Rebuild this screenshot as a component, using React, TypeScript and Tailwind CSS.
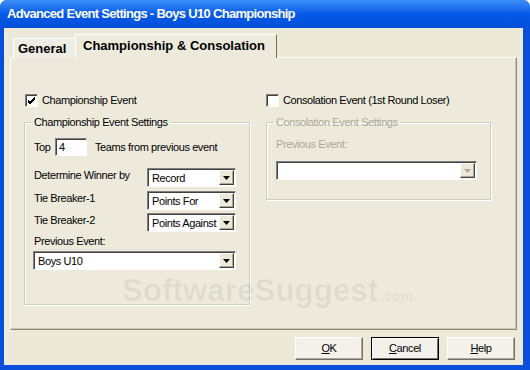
const ui = "font-['Liberation_Sans',Arial,sans-serif]"

function Arrow({ off }: { off?: boolean }) {
  return (
    <svg width="7" height="4" viewBox="0 0 7 4">
      <path d="M0 0h7L3.5 4z" fill={off ? "#ACA899" : "#000"} />
    </svg>
  )
}

function Combo({ value, className = "", off }: { value?: string; className?: string; off?: boolean }) {
  return (
    <div
      className={`flex h-[19px] items-stretch border border-t-[#808080] border-l-[#808080] border-r-white border-b-white bg-white shadow-[inset_1px_1px_0_#404040] ${className}`}
    >
      <span className="flex-1 truncate pl-[4px] pt-[1px] leading-[16px]">{value}</span>
      <span className="m-[1px] flex w-[15px] items-center justify-center border border-t-white border-l-white border-r-[#404040] border-b-[#404040] bg-[#ECE9D8] shadow-[inset_-1px_-1px_0_#ACA899]">
        <Arrow off={off} />
      </span>
    </div>
  )
}

function Check({ on }: { on?: boolean }) {
  return (
    <span className="flex h-[13px] w-[13px] shrink-0 items-center justify-center border border-t-[#808080] border-l-[#808080] border-r-white border-b-white bg-white shadow-[inset_1px_1px_0_#404040]">
      {on && (
        <svg width="9" height="9" viewBox="0 0 9 9">
          <path d="M1 4l2 2 5-5M1 5l2 2 5-5M1 6l2 2 5-5" stroke="#000" strokeWidth="1" fill="none" />
        </svg>
      )}
    </span>
  )
}

function Btn({ hot, rest, def }: { hot: string; rest: string; def?: boolean }) {
  return (
    <div
      className={`flex h-[23px] w-[68px] items-center justify-center bg-[#F3F1EA] ${
        def
          ? "border border-black shadow-[inset_1px_1px_0_white,inset_-1px_-1px_0_#716F64]"
          : "border border-t-white border-l-white border-r-[#716F64] border-b-[#716F64] shadow-[inset_-1px_-1px_0_#ACA899]"
      }`}
    >
      <span>
        <span className="underline">{hot}</span>
        {rest}
      </span>
    </div>
  )
}

export default function App() {
  return (
    <div className={`${ui} flex h-[370px] w-[530px] flex-col overflow-hidden rounded-t-[7px] bg-[#0A4FDB] text-[11px] tracking-[-0.4px] text-black`}>
      <div className="flex h-[28px] shrink-0 items-center bg-linear-to-b from-[#3D8FF7] via-[#0559E7] to-[#0350DA] pl-[7px] text-[13px] font-bold tracking-[-0.7px] text-white">
        Advanced Event Settings - Boys U10 Championship
      </div>

      <div className="mb-[5px] ml-[4px] mr-[7px] flex flex-1 flex-col bg-[#ECE9D8] pl-[6px]">
        {/* tabs */}
        <div className="relative z-10 mt-[6px] -mb-[1px] flex h-[24px] items-end text-[13px] font-bold tracking-normal">
          <div className="ml-[3px] flex h-[20px] w-[62px] items-center border-t border-l border-t-white border-l-white bg-[#EFEDE3] pl-[4px]">
            General
          </div>
          <div className="flex h-[24px] w-[202px] items-center justify-center border-t border-l border-r border-t-white border-l-white border-r-[#716F64] bg-[#EDEADC] pb-[2px] pr-[4px]">
            Championship &amp; Consolation
          </div>
        </div>

        {/* panel */}
        <div className="relative flex h-[273px] w-[507px] border border-t-white border-l-white border-r-[#8E8B7D] border-b-[#8E8B7D] bg-[#EDEADC] pl-[13px] pt-[35px] shadow-[inset_-1px_-1px_0_#C9C6B6]">
          {/* left column */}
          <div className="flex w-[226px] flex-col">
            <div className="flex h-[14px] items-center gap-[4px] pl-[1px]">
              <Check on />
              <span>Championship Event</span>
            </div>
            <fieldset className="mt-[9px] h-[189px] border border-[#D0CEBF] px-[9px] shadow-[inset_1px_1px_0_white,1px_1px_0_white]">
              <legend className="-ml-[2px] px-[2px] leading-[13px]">Championship Event Settings</legend>
              <div className="mt-[9px] flex h-[18px] items-center">
                <span className="w-[21px]">Top</span>
                <div className="h-[18px] w-[32px] border border-t-[#808080] border-l-[#808080] border-r-white border-b-white bg-white pl-[3px] leading-[16px] shadow-[inset_1px_1px_0_#404040]">
                  4
                </div>
                <span className="ml-[8px]">Teams from previous event</span>
              </div>
              <div className="mt-[12px] flex items-start">
                <span className="w-[113px] pt-[1px] leading-[13px]">Determine Winner by</span>
                <Combo value="Record" className="w-[89px]" />
              </div>
              <div className="mt-[4px] flex items-start">
                <span className="w-[113px] pt-[1px] leading-[13px]">Tie Breaker-1</span>
                <Combo value="Points For" className="w-[89px]" />
              </div>
              <div className="mt-[3px] flex items-start">
                <span className="w-[113px] pt-[1px] leading-[13px]">Tie Breaker-2</span>
                <Combo value="Points Against" className="w-[89px]" />
              </div>
              <div className="mt-[3px] leading-[13px]">Previous Event:</div>
              <Combo value="Boys U10" className="-ml-[1px] mt-[3px] w-[203px]" />
            </fieldset>
          </div>

          {/* right column */}
          <div className="ml-[16px] flex w-[225px] flex-col">
            <div className="flex h-[14px] items-center gap-[4px]">
              <Check />
              <span>Consolation Event (1st Round Loser)</span>
            </div>
            <fieldset className="mt-[9px] h-[84px] border border-[#D0CEBF] px-[9px] text-[#ACA899] shadow-[inset_1px_1px_0_white,1px_1px_0_white]">
              <legend className="-ml-[2px] px-[2px] leading-[13px]">Consolation Event Settings</legend>
              <div className="mt-[9px] leading-[13px]">Previous Event:</div>
              <Combo off className="mt-[10px] w-[201px]" />
            </fieldset>
          </div>

          {/* watermark */}
          <div className="pointer-events-none absolute left-[111px] top-[218px] flex items-baseline whitespace-nowrap font-bold tracking-normal text-black/[0.06]">
            <span className="text-[31px] leading-[30px] tracking-[0.2px]">SoftwareSuggest</span>
            <span className="ml-[2px] text-[14px]">.com</span>
          </div>
        </div>

        {/* buttons */}
        <div className="mt-[7px] flex justify-end gap-[8px] pr-[8px]">
          <Btn hot="O" rest="K" />
          <Btn hot="C" rest="ancel" def />
          <Btn hot="H" rest="elp" />
        </div>
      </div>
    </div>
  )
}
